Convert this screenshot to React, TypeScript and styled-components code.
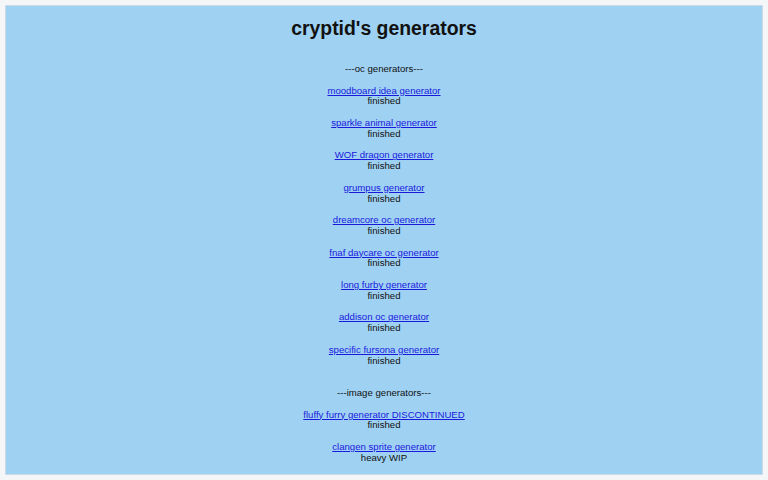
import styled, { createGlobalStyle } from "styled-components";

const GlobalStyle = createGlobalStyle`
    html, body {
        margin: 0;
        padding: 0;
        background-color: #f4f6f7;
    }
`;

const Page = styled.div`
    padding: 5px;
    height: 480px;
    box-sizing: border-box;
`;

const Panel = styled.div`
    height: 470px;
    box-sizing: border-box;
    border: 1px solid #c9dbe7;
    background-color: #9fd1f3;
    overflow: hidden;
    text-align: center;
    font-family: "Liberation Sans", Arial, sans-serif;
    color: #111;
`;

const Title = styled.h1`
    font-size: 19.4px;
    font-weight: bold;
    line-height: 22px;
    margin: 11px 0 25px;
`;

const Section = styled.div<{ $gap?: number }>`
    font-size: 9.6px;
    line-height: 10.8px;
    margin-top: ${p => p.$gap ?? 0}px;
`;

const Heading = styled.div`
    margin-bottom: 10.8px;
`;

const Item = styled.div`
    margin-bottom: 10.8px;
`;

const Link = styled.a`
    display: block;
    width: max-content;
    margin: 0 auto;
    color: #1a1add;
    text-decoration: underline;
`;

const Status = styled.div``;

const ocGenerators = [
    {title: "moodboard idea generator", status: "finished"},
    {title: "sparkle animal generator", status: "finished"},
    {title: "WOF dragon generator", status: "finished"},
    {title: "grumpus generator", status: "finished"},
    {title: "dreamcore oc generator", status: "finished"},
    {title: "fnaf daycare oc generator", status: "finished"},
    {title: "long furby generator", status: "finished"},
    {title: "addison oc generator", status: "finished"},
    {title: "specific fursona generator", status: "finished"},
];

const imageGenerators = [
    {title: "fluffy furry generator DISCONTINUED", status: "finished"},
    {title: "clangen sprite generator", status: "heavy WIP"},
];

export default function App() {
    return (
        <>
            <GlobalStyle/>
            <Page>
                <Panel>
                    <Title>cryptid's generators</Title>
                    <Section>
                        <Heading>---oc generators---</Heading>
                        {ocGenerators.map(g => (
                            <Item key={g.title}>
                                <Link href="#">{g.title}</Link>
                                <Status>{g.status}</Status>
                            </Item>
                        ))}
                    </Section>
                    <Section $gap={21.6}>
                        <Heading>---image generators---</Heading>
                        {imageGenerators.map(g => (
                            <Item key={g.title}>
                                <Link href="#">{g.title}</Link>
                                <Status>{g.status}</Status>
                            </Item>
                        ))}
                    </Section>
                </Panel>
            </Page>
        </>
    );
}
